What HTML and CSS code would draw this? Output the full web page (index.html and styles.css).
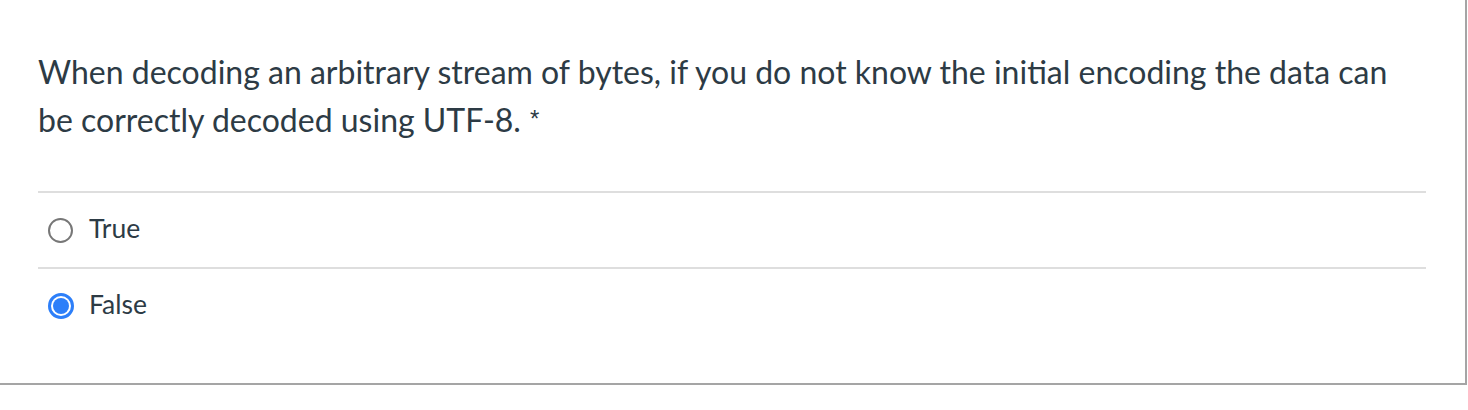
FILE: index.html
```html
<!DOCTYPE html>
<html>
<head>
<meta charset="utf-8">
<link rel="stylesheet" href="styles.css">
</head>
<body>
<div class="card">
  <div class="question">When decoding an arbitrary stream of bytes, if you do not know the initial encoding the data can be correctly decoded using UTF-8. <span class="req">*</span></div>
  <div class="options">
    <label class="option">
      <span class="radio"></span>
      <span class="label">True</span>
    </label>
    <label class="option">
      <span class="radio checked"></span>
      <span class="label">False</span>
    </label>
  </div>
</div>
</body>
</html>
```
FILE: styles.css
```css
html, body {
  margin: 0;
  padding: 0;
  background: #ffffff;
}
body {
  font-family: Lato, "Open Sans", sans-serif;
  color: #2d3b45;
}
.card {
  box-sizing: border-box;
  width: 1467px;
  height: 385px;
  border-right: 2px solid #a5a5a5;
  border-bottom: 2px solid #a5a5a5;
  padding: 48px 39px 0 38px;
}
.question {
  font-size: 32px;
  line-height: 48px;
}
.req {
  font-family: "Liberation Sans", Arial, sans-serif;
  font-size: 24px;
  line-height: 1;
  position: relative;
  top: -5px;
  margin-left: 1px;
}
.options {
  margin-top: 47px;
  border-top: 2px solid #dedede;
}
.option {
  display: flex;
  align-items: center;
  height: 74px;
  padding-left: 10px;
  border-bottom: 2px solid #dedede;
}
.option:last-child {
  border-bottom: none;
}
.radio {
  box-sizing: border-box;
  flex: none;
  width: 25px;
  height: 25px;
  border-radius: 50%;
  border: 2px solid #777777;
  margin-right: 16px;
  position: relative;
}
.radio.checked {
  width: 26px;
  height: 26px;
  border: 3px solid #2d7ff9;
  margin-right: 15px;
}
.radio.checked::after {
  content: "";
  position: absolute;
  left: 2px;
  top: 2px;
  right: 2px;
  bottom: 2px;
  border-radius: 50%;
  background: #2d7ff9;
}
.label {
  font-size: 26.5px;
  position: relative;
  top: -2px;
}
```
